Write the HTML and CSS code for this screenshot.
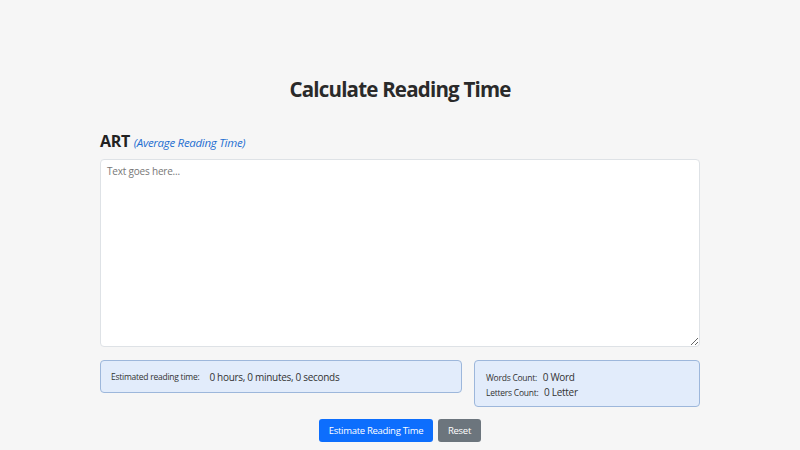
FILE: index.html
```html
<!DOCTYPE html>
<html lang="en">
<head>
<meta charset="utf-8">
<title>Calculate Reading Time</title>
<link rel="stylesheet" href="styles.css">
</head>
<body>
<main class="container">
  <h1 class="title">Calculate Reading Time</h1>
  <h2 class="label">ART <em class="sub">(Average Reading Time)</em></h2>
  <textarea class="text" placeholder="Text goes here..."></textarea>
  <div class="results">
    <div class="box box-time">
      <span class="key">Estimated reading time:</span>
      <span class="val">0 hours, 0 minutes, 0 seconds</span>
    </div>
    <div class="box box-count">
      <div class="line"><span class="key">Words Count:</span> <span class="val">0 Word</span></div>
      <div class="line"><span class="key">Letters Count:</span> <span class="val">0 Letter</span></div>
    </div>
  </div>
  <div class="actions">
    <button class="btn btn-primary">Estimate Reading Time</button>
    <button class="btn btn-secondary">Reset</button>
  </div>
</main>
</body>
</html>
```
FILE: styles.css
```css
* { box-sizing: border-box; }
html, body { margin: 0; padding: 0; }
body {
  background: #f6f6f6;
  font-family: "Open Sans", "Noto Sans", sans-serif;
  color: #212529;
}
.container {
  width: 600px;
  margin: 0 auto;
  padding-top: 74px;
}
.title {
  margin: 0;
  text-align: center;
  font-size: 20.5px;
  line-height: 30px;
  font-weight: 700;
  letter-spacing: -0.8px;
  color: #2a2a2a;
}
.label {
  margin: 26px 0 5px;
  font-size: 16px;
  line-height: 22px;
  font-weight: 700;
  letter-spacing: -0.3px;
  color: #222;
}
.sub {
  font-size: 11.5px;
  font-weight: 400;
  letter-spacing: -0.3px;
  color: #1f6fd1;
}
.text {
  display: block;
  width: 600px;
  height: 188px;
  margin: 0;
  padding: 4px 6px;
  background: #fff;
  border: 1px solid #dee2e6;
  border-radius: 4px;
  font-family: inherit;
  font-size: 10px;
  letter-spacing: -0.2px;
  resize: vertical;
}
.text::placeholder { color: #777; }
.results {
  display: flex;
  gap: 12px;
  align-items: flex-start;
  margin-top: 13px;
}
.box {
  background: #e2ecfb;
  border: 1px solid #9db7db;
  border-radius: 4px;
  color: #333;
}
.box-time {
  width: 362px;
  height: 33px;
  padding: 0 10px;
  display: flex;
  align-items: center;
  gap: 10px;
}
.box-count {
  width: 226px;
  height: 47px;
  padding: 8px 11px;
  display: flex;
  flex-direction: column;
  justify-content: center;
}
.line { line-height: 13px; word-spacing: 1.5px; }
.key { font-size: 8.5px; letter-spacing: -0.25px; color: #333; word-spacing: 0; }
.val { font-size: 10px; letter-spacing: -0.3px; color: #333; word-spacing: 0; }
.actions {
  display: flex;
  justify-content: center;
  gap: 5px;
  margin-top: 12px;
}
.btn {
  height: 23px;
  border: 0;
  border-radius: 3px;
  font-family: inherit;
  font-size: 9.5px;
  letter-spacing: -0.3px;
  white-space: nowrap;
  color: #fff;
  padding: 0;
}
.btn-primary { background: #0d6efd; width: 114px; }
.btn-secondary { background: #6c757d; width: 43px; }
```
